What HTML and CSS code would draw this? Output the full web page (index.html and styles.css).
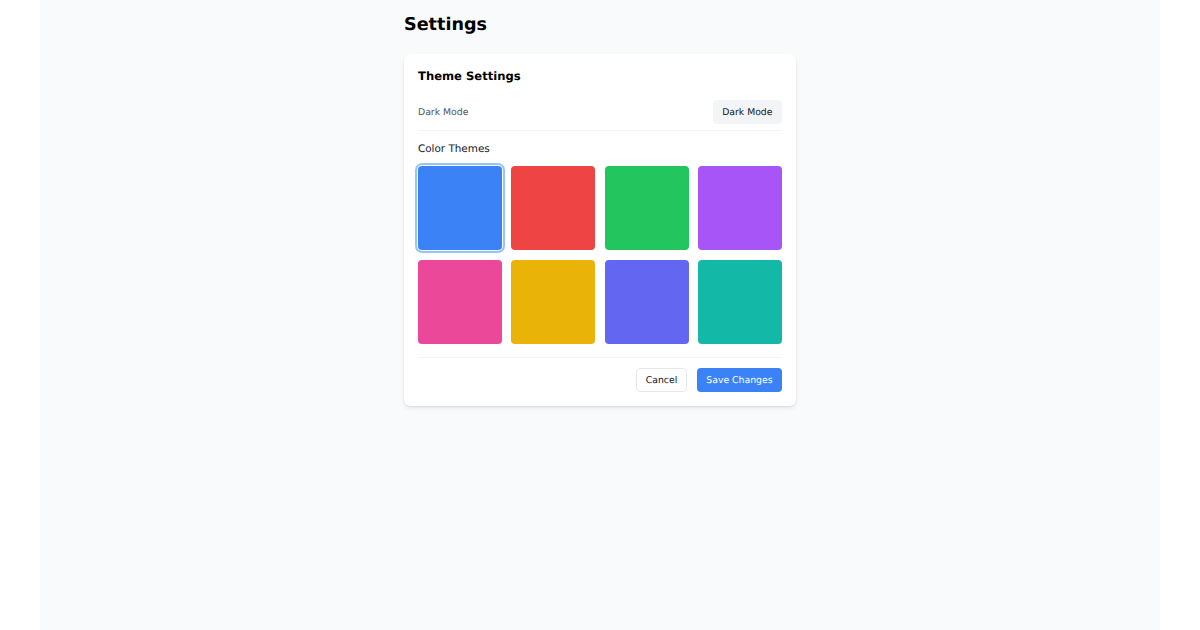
FILE: index.html
```html
<!DOCTYPE html>
<html>
<head>
<meta charset="utf-8">
<link rel="stylesheet" href="styles.css">
</head>
<body>
<div class="page">
  <div class="column">
    <h1 class="page-title">Settings</h1>
    <div class="card">
      <h2 class="card-title">Theme Settings</h2>
      <div class="row">
        <span class="row-label">Dark Mode</span>
        <button class="btn btn-soft">Dark Mode</button>
      </div>
      <div class="section-label">Color Themes</div>
      <div class="swatches">
        <div class="swatch selected" style="background:#3b82f6"></div>
        <div class="swatch" style="background:#ef4444"></div>
        <div class="swatch" style="background:#22c55e"></div>
        <div class="swatch" style="background:#a855f7"></div>
        <div class="swatch" style="background:#ec4899"></div>
        <div class="swatch" style="background:#eab308"></div>
        <div class="swatch" style="background:#6366f1"></div>
        <div class="swatch" style="background:#14b8a6"></div>
      </div>
      <div class="actions">
        <button class="btn btn-outline">Cancel</button>
        <button class="btn btn-primary">Save Changes</button>
      </div>
    </div>
  </div>
</div>
</body>
</html>
```
FILE: styles.css
```css
html, body {
  margin: 0;
  padding: 0;
  background: #ffffff;
  font-family: "DejaVu Sans", sans-serif;
  color: #111827;
  text-rendering: geometricPrecision;
}
.page {
  max-width: 1120px;
  margin: 0 auto;
  background: #f9fafb;
  min-height: 630px;
}
.column {
  width: 392px;
  margin: 0 auto;
  padding-top: 13px;
}
.page-title {
  margin: 0;
  font-size: 17.6px;
  line-height: 24px;
  font-weight: 700;
  color: #000;
}
.card {
  margin-top: 17px;
  background: #fff;
  border-radius: 6px;
  box-shadow: 0 2px 4px rgba(0,0,0,0.08), 0 1px 2px rgba(0,0,0,0.06);
  padding: 14px;
}
.card-title {
  margin: 0;
  padding-top: 1px;
  font-size: 11.6px;
  line-height: 14px;
  font-weight: 700;
  color: #000;
}
.row {
  margin-top: 17px;
  display: flex;
  justify-content: space-between;
  align-items: center;
  padding-bottom: 6px;
  border-bottom: 1px solid #f3f4f6;
}
.row-label {
  font-size: 9.3px;
  color: #4b5563;
}
.btn {
  font-family: "DejaVu Sans", sans-serif;
  text-rendering: geometricPrecision;
  font-size: 9.3px;
  height: 24px;
  padding: 0 8.5px;
  border-radius: 4px;
  border: 1px solid transparent;
  cursor: pointer;
}
.btn-soft {
  background: #f3f4f6;
  color: #111827;
}
.btn-outline {
  background: #fff;
  border-color: #e5e7eb;
  color: #111827;
}
.btn-primary {
  background: #3b82f6;
  color: #fff;
}
.section-label {
  margin-top: 11px;
  font-size: 10.4px;
  line-height: 14px;
  color: #111827;
}
.swatches {
  margin-top: 10px;
  display: grid;
  grid-template-columns: repeat(4, 84px);
  justify-content: space-between;
  row-gap: 10px;
  padding-bottom: 13px;
  border-bottom: 1px solid #f3f4f6;
}
.swatch {
  height: 84px;
  border-radius: 4px;
}
.swatch.selected {
  box-shadow: 0 0 0 1px #fff, 0 0 0 3px #93c5fd;
}
.actions {
  margin-top: 10px;
  display: flex;
  justify-content: flex-end;
  gap: 10px;
}
```
